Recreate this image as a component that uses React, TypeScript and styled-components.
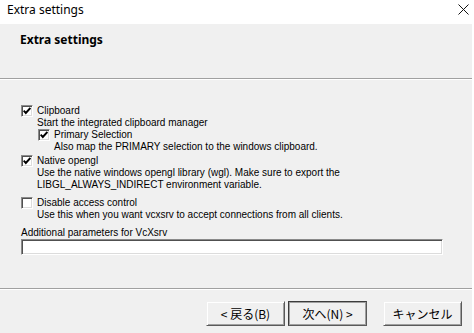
import * as React from "react";
import styled, { createGlobalStyle } from "styled-components";

const GlobalStyle = createGlobalStyle`
  html, body {
    margin: 0;
    padding: 0;
    background: #ffffff;
  }
  body {
    font-family: "Liberation Sans", Arial, sans-serif;
    color: #000000;
  }
`;

const Window = styled.div`
  width: 474px;
  height: 333px;
  display: flex;
  flex-direction: column;
  background: #ffffff;
  overflow: hidden;
`;

const TitleBar = styled.div`
  height: 24px;
  flex: 0 0 24px;
  display: flex;
  align-items: center;
  justify-content: space-between;
  padding: 0 5px 5px 7px;
  box-sizing: border-box;
  font: 12px "Noto Sans", "Open Sans", sans-serif;
`;

const Pane = styled.div`
  flex: 1;
  display: flex;
  flex-direction: column;
  background: #f0f0f0;
  margin-right: 2px;
`;

const Header = styled.div`
  height: 54px;
  box-sizing: border-box;
  padding: 7px 0 0 20px;
  font: bold 12px "Noto Sans", "Open Sans", sans-serif;
`;

const Rule = styled.div`
  border-top: 1px solid #a0a0a0;
  border-bottom: 1px solid #ffffff;
`;

const Body = styled.div`
  height: 208px;
  box-sizing: border-box;
  padding: 25px 29px 0 21px;
  font-size: 10px;
  line-height: 12px;
`;

const Group = styled.div<{ $gap?: number; $indent?: number }>`
  margin-top: ${(p) => p.$gap ?? 0}px;
  margin-left: ${(p) => p.$indent ?? 0}px;
`;

const CheckRow = styled.div`
  display: flex;
  align-items: center;
  gap: 4px;
  height: 12px;
`;

const Box = styled.span`
  width: 12px;
  height: 12px;
  box-sizing: border-box;
  display: inline-flex;
  align-items: center;
  justify-content: center;
  background: #ffffff;
  border-top: 1px solid #8a8a8a;
  border-left: 1px solid #8a8a8a;
  border-right: 1px solid #ffffff;
  border-bottom: 1px solid #ffffff;
  box-shadow: inset 1px 1px 0 #505050, inset -1px -1px 0 #dcdcdc;
`;

const Desc = styled.div`
  margin-left: 16px;
  white-space: nowrap;
`;

const FieldLabel = styled.div`
  margin-top: 6px;
`;

const Field = styled.div`
  width: 422px;
  height: 16px;
  box-sizing: border-box;
  background: #ffffff;
  border-top: 1px solid #8a8a8a;
  border-left: 1px solid #8a8a8a;
  border-right: 1px solid #ffffff;
  border-bottom: 1px solid #ffffff;
  box-shadow: inset 1px 1px 0 #505050, inset -1px -1px 0 #dcdcdc;
`;

const Footer = styled.div`
  flex: 1;
  display: flex;
  justify-content: flex-end;
  align-items: flex-start;
  padding: 11px 10px 0 0;
`;

const Button = styled.button<{ $primary?: boolean; $gap?: number }>`
  width: 79px;
  height: 25px;
  margin-left: ${(p) => p.$gap ?? 0}px;
  padding: 0;
  background: #f0f0f0;
  font: 12px "Noto Sans CJK JP", "Noto Sans", sans-serif;
  color: #000000;
  box-sizing: border-box;
  border: 1px solid ${(p) => (p.$primary ? "#3c3c3c" : "#f0f0f0")};
  border-right-color: #5a5a5a;
  border-bottom-color: #5a5a5a;
  box-shadow: ${(p) =>
    p.$primary
      ? "inset 1px 1px 0 #a0a0a0, inset -1px -1px 0 #a0a0a0"
      : "inset 1px 1px 0 #ffffff, inset -1px -1px 0 #a0a0a0"};
`;

const Check = () => (
  <svg width="8" height="8" viewBox="0 0 8 8">
    <polyline
      points="0.6,3.6 2.8,6 7.4,1"
      fill="none"
      stroke="#000"
      strokeWidth="1.9"
    />
  </svg>
);

const Option = ({ label, checked }: { label: string; checked?: boolean }) => (
  <CheckRow>
    <Box>{checked && <Check />}</Box>
    <span>{label}</span>
  </CheckRow>
);

export default function App() {
  return (
    <>
      <GlobalStyle />
      <Window>
        <TitleBar>
          <span>Extra settings</span>
          <svg width="11" height="11" viewBox="0 0 11 11">
            <path d="M0.5 0.5 L10.5 10.5 M10.5 0.5 L0.5 10.5" stroke="#111" strokeWidth="1" />
          </svg>
        </TitleBar>
        <Pane>
          <Header>Extra settings</Header>
          <Rule />
          <Body>
            <Group>
              <Option label="Clipboard" checked />
              <Desc>Start the integrated clipboard manager</Desc>
              <Group $indent={17}>
                <Option label="Primary Selection" checked />
                <Desc>Also map the PRIMARY selection to the windows clipboard.</Desc>
              </Group>
            </Group>
            <Group $gap={2}>
              <Option label="Native opengl" checked />
              <Desc>Use the native windows opengl library (wgl). Make sure to export the</Desc>
              <Desc>LIBGL_ALWAYS_INDIRECT environment variable.</Desc>
            </Group>
            <Group $gap={6}>
              <Option label="Disable access control" />
              <Desc>Use this when you want vcxsrv to accept connections from all clients.</Desc>
            </Group>
            <FieldLabel>Additional parameters for VcXsrv</FieldLabel>
            <Field />
          </Body>
          <Rule />
          <Footer>
            <Button>&lt; 戻る(B)</Button>
            <Button $primary $gap={3}>
              次へ(N) &gt;
            </Button>
            <Button $gap={16}>キャンセル</Button>
          </Footer>
        </Pane>
      </Window>
    </>
  );
}
